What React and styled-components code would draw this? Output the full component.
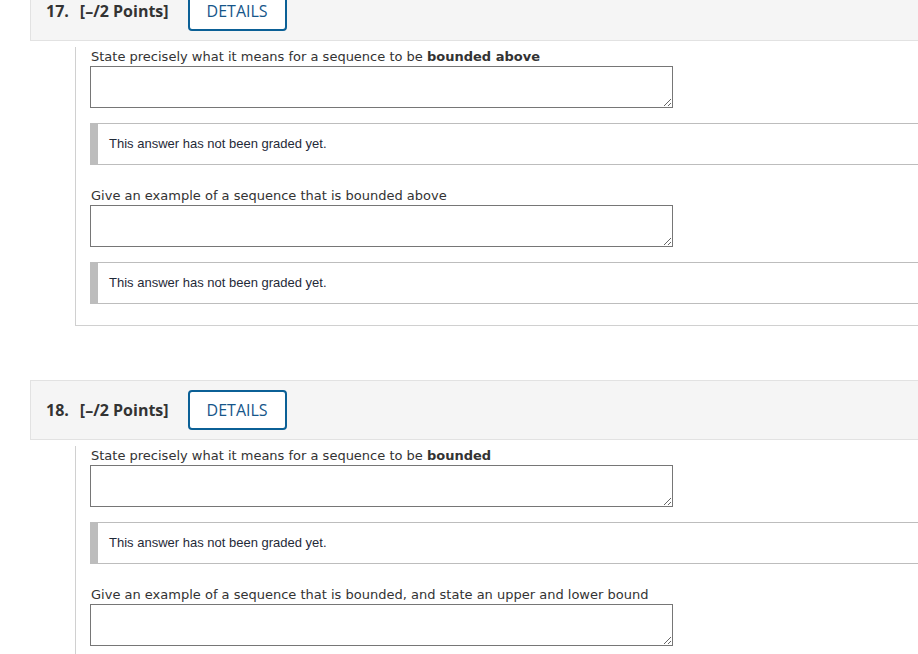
import React from "react";
import styled, { createGlobalStyle } from "styled-components";

const GlobalStyle = createGlobalStyle`
  html, body {
    margin: 0;
    padding: 0;
    background: #fff;
    overflow: hidden;
  }
`;

const Page = styled.div`
  margin-top: -19px;
  padding-left: 30px;
  width: 960px;
`;

const Question = styled.div`
  margin-bottom: 54px;
`;

const Header = styled.div`
  display: flex;
  align-items: center;
  height: 58px;
  padding-left: 15px;
  background: #f5f5f5;
  border: 1px solid #e2e2e2;
  font-family: "Open Sans", sans-serif;
  font-weight: 700;
  font-size: 16px;
  color: #333;
`;

const Number = styled.span`
  margin-right: 11px;
`;

const Points = styled.span`
  margin-right: 19px;
`;

const DetailsButton = styled.button`
  box-sizing: border-box;
  width: 99px;
  height: 40px;
  margin-top: -1px;
  background: #fff;
  border: 2px solid #0b6096;
  border-radius: 4px;
  font-family: "Open Sans", sans-serif;
  font-size: 16px;
  font-weight: 400;
  color: #16568a;
`;

const Body = styled.div`
  margin-left: 45px;
  padding: 0 0 21px 14px;
  border-left: 1px solid #d0d0d0;
  border-bottom: 1px solid #d0d0d0;
`;

const Part = styled.div`
  display: flex;
  flex-direction: column;
  margin-top: ${(p) => (p.first ? "6px" : "21px")};
`;

const Label = styled.div`
  font-family: "DejaVu Sans", Verdana, sans-serif;
  font-size: 13px;
  line-height: 19px;
  color: #333;
  padding-left: 1px;

  b {
    font-weight: 700;
  }
`;

const Answer = styled.textarea`
  box-sizing: border-box;
  width: 583px;
  height: 42px;
  margin: 0;
  border: 1px solid #767676;
  background: #fff;
  display: block;
`;

const Graded = styled.div`
  box-sizing: border-box;
  display: flex;
  align-items: center;
  height: 42px;
  margin-top: 15px;
  padding: 0 0 2px 11px;
  border-top: 1px solid #bdbdbd;
  border-bottom: 1px solid #bdbdbd;
  border-left: 8px solid #bdbdbd;
  font-family: "Liberation Sans", Arial, sans-serif;
  font-size: 13px;
  color: #1f2a38;
`;

const questions = [
  {
    num: "17.",
    parts: [
      {
        label: (
          <>
            State precisely what it means for a sequence to be{" "}
            <b>bounded above</b>
          </>
        ),
        graded: true,
      },
      {
        label: "Give an example of a sequence that is bounded above",
        graded: true,
      },
    ],
  },
  {
    num: "18.",
    parts: [
      {
        label: (
          <>
            State precisely what it means for a sequence to be <b>bounded</b>
          </>
        ),
        graded: true,
      },
      {
        label:
          "Give an example of a sequence that is bounded, and state an upper and lower bound",
        graded: true,
      },
    ],
  },
];

const App = () => (
  <>
    <GlobalStyle />
    <Page>
      {questions.map((q) => (
        <Question key={q.num}>
          <Header>
            <Number>{q.num}</Number>
            <Points>[–/2 Points]</Points>
            <DetailsButton>DETAILS</DetailsButton>
          </Header>
          <Body>
            {q.parts.map((part, i) => (
              <Part key={i} first={i === 0}>
                <Label>{part.label}</Label>
                <Answer />
                {part.graded && (
                  <Graded>This answer has not been graded yet.</Graded>
                )}
              </Part>
            ))}
          </Body>
        </Question>
      ))}
    </Page>
  </>
);

export default App;
